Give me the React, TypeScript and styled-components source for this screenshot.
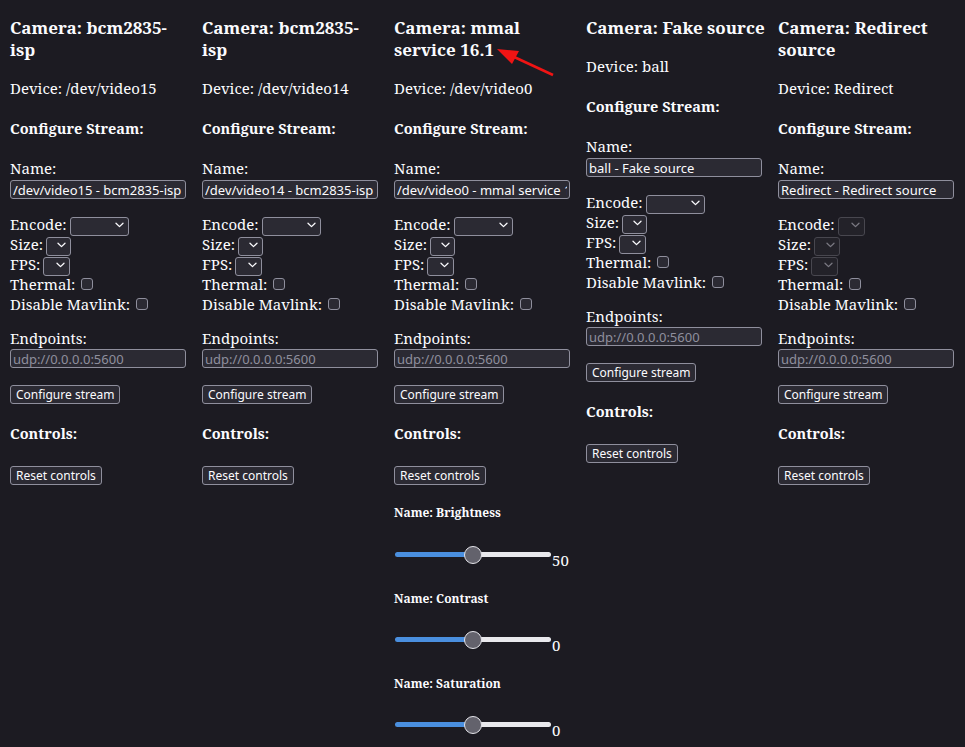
import React from 'react';
import styled, { createGlobalStyle } from 'styled-components';

const Global = createGlobalStyle`
  html, body { margin: 0; padding: 0; background: #1c1b22; color: #fbfbfe; }
  body {
    font-family: "Noto Serif", "DejaVu Serif", "Liberation Serif", serif;
    font-size: 15px;
  }
  * { box-sizing: border-box; }
`;

const Page = styled.div`
  position: relative;
  display: grid;
  grid-template-columns: repeat(5, 181px);
  column-gap: 11px;
  padding: 0 10px 40px;
  align-items: start;
`;

const Column = styled.section`
  display: flex;
  flex-direction: column;
  align-items: flex-start;
  min-width: 0;
`;

const Title = styled.h3`
  margin: 17px 0 0;
  font-size: 17px;
  line-height: 22px;
  font-weight: 700;
`;

const Text = styled.div<{ $mt: number }>`
  margin-top: ${p => p.$mt}px;
  line-height: 20px;
  white-space: nowrap;
`;

const Heading = styled.h4<{ $mt: number }>`
  margin: ${p => p.$mt}px 0 0;
  font-size: 14.5px;
  line-height: 20px;
  font-weight: 700;
`;

const TextInput = styled.input<{ $mt: number }>`
  margin-top: ${p => p.$mt}px;
  width: 176px;
  height: 19px;
  padding: 0 2px;
  background: #2b2a33;
  color: #fbfbfe;
  border: 1px solid #8f8f9d;
  border-radius: 3px;
  font-family: "Noto Sans", "DejaVu Sans", sans-serif;
  font-size: 13px;
  outline: none;
  &::placeholder { color: #8f8f9d; opacity: 1; }
`;

const Options = styled.div`
  margin-top: 15px;
  display: flex;
  flex-direction: column;
`;

const OptionRow = styled.label`
  display: flex;
  align-items: center;
  height: 20px;
  white-space: nowrap;
`;

const SelectWrap = styled.span<{ $w: number }>`
  position: relative;
  display: inline-block;
  width: ${p => p.$w}px;
  height: 19px;
  margin-left: 3px;
`;

const Select = styled.select<{ $dim?: boolean }>`
  appearance: none;
  -webkit-appearance: none;
  width: 100%;
  height: 100%;
  background: #2b2a33;
  border: 1px solid ${p => (p.$dim ? '#5b5a63' : '#8f8f9d')};
  border-radius: 3px;
  color: #fbfbfe;
  font-size: 12px;
  padding: 0 4px;
  outline: none;
  &:disabled { background: #26252d; }
`;

const Chevron = styled.svg<{ $dim?: boolean }>`
  position: absolute;
  right: 5px;
  top: 7px;
  width: 9px;
  height: 6px;
  pointer-events: none;
  stroke: ${p => (p.$dim ? '#7a7982' : '#fbfbfe')};
`;

const Check = styled.input`
  appearance: none;
  -webkit-appearance: none;
  width: 12px;
  height: 12px;
  margin: 0 0 0 6px;
  background: #2b2a33;
  border: 1px solid #8f8f9d;
  border-radius: 3px;
`;

const Button = styled.button<{ $mt: number }>`
  margin-top: ${p => p.$mt}px;
  height: 19px;
  padding: 0 5px;
  background: #2b2a33;
  color: #fbfbfe;
  border: 1px solid #8f8f9d;
  border-radius: 3px;
  font-family: "Noto Sans", "DejaVu Sans", sans-serif;
  font-size: 12px;
  line-height: 17px;
`;

const ControlName = styled.h5<{ $mt: number }>`
  margin: ${p => p.$mt}px 0 0;
  font-size: 12px;
  line-height: 16px;
  font-weight: 700;
`;

const SliderRow = styled.div<{ $mt: number }>`
  margin-top: ${p => p.$mt}px;
  display: flex;
  align-items: flex-end;
`;

const Range = styled.input`
  appearance: none;
  -webkit-appearance: none;
  width: 156px;
  height: 17px;
  margin: 0 1px 5px 1px;
  background: transparent;
  &::-webkit-slider-runnable-track {
    height: 5px;
    border-radius: 3px;
    background: var(--track);
  }
  &::-webkit-slider-thumb {
    -webkit-appearance: none;
    width: 18px;
    height: 18px;
    margin-top: -6.5px;
    border-radius: 50%;
    background: #63626c;
    border: 1.5px solid #e4e4ea;
  }
`;

const SliderValue = styled.span`
  line-height: 16px;
  font-size: 15px;
`;

const Arrow = styled.svg`
  position: absolute;
  left: 490px;
  top: 40px;
  width: 70px;
  height: 42px;
  overflow: visible;
`;

type Cam = {
  title: string;
  device: string;
  name: string;
  encodeW: number;
  sizeW: number;
  fpsW: number;
  disabled?: boolean;
  controls?: { name: string; value: number; pos: number }[];
};

const cams: Cam[] = [
  { title: 'Camera: bcm2835-isp', device: '/dev/video15', name: '/dev/video15 - bcm2835-isp', encodeW: 59, sizeW: 25, fpsW: 27 },
  { title: 'Camera: bcm2835-isp', device: '/dev/video14', name: '/dev/video14 - bcm2835-isp', encodeW: 59, sizeW: 25, fpsW: 27 },
  {
    title: 'Camera: mmal service 16.1', device: '/dev/video0', name: '/dev/video0 - mmal service 16.1', encodeW: 59, sizeW: 25, fpsW: 27,
    controls: [
      { name: 'Name: Brightness', value: 50, pos: 50 },
      { name: 'Name: Contrast', value: 0, pos: 50 },
      { name: 'Name: Saturation', value: 0, pos: 50 },
    ],
  },
  { title: 'Camera: Fake source', device: 'ball', name: 'ball - Fake source', encodeW: 59, sizeW: 25, fpsW: 27 },
  { title: 'Camera: Redirect source', device: 'Redirect', name: 'Redirect - Redirect source', encodeW: 27, sizeW: 26, fpsW: 27, disabled: true },
];

const Dropdown: React.FC<{ w: number; dim?: boolean }> = ({ w, dim }) => (
  <SelectWrap $w={w}>
    <Select $dim={dim} disabled={dim} defaultValue="">
      <option value=""></option>
    </Select>
    <Chevron $dim={dim} viewBox="0 0 9 6" fill="none" strokeWidth="1.3" strokeLinecap="round" strokeLinejoin="round">
      <path d="M1 1.2 L4.5 4.6 L8 1.2" />
    </Chevron>
  </SelectWrap>
);

const CameraColumn: React.FC<{ cam: Cam }> = ({ cam }) => (
  <Column>
    <Title>{cam.title}</Title>
    <Text $mt={17}>Device: {cam.device}</Text>
    <Heading $mt={20}>Configure Stream:</Heading>
    <Text $mt={20}>Name:</Text>
    <TextInput $mt={2} defaultValue={cam.name} />
    <Options>
      <OptionRow>Encode:<Dropdown w={cam.encodeW} dim={cam.disabled} /></OptionRow>
      <OptionRow>Size:<Dropdown w={cam.sizeW} dim={cam.disabled} /></OptionRow>
      <OptionRow>FPS:<Dropdown w={cam.fpsW} dim={cam.disabled} /></OptionRow>
      <OptionRow>Thermal:<Check type="checkbox" /></OptionRow>
      <OptionRow>Disable Mavlink:<Check type="checkbox" /></OptionRow>
    </Options>
    <Text $mt={14}>Endpoints:</Text>
    <TextInput $mt={1} placeholder="udp://0.0.0.0:5600" />
    <Button $mt={17}>Configure stream</Button>
    <Heading $mt={19}>Controls:</Heading>
    <Button $mt={23}>Reset controls</Button>
    {cam.controls?.map((c, i) => (
      <React.Fragment key={c.name}>
        <ControlName $mt={i === 0 ? 20 : 23}>{c.name}</ControlName>
        <SliderRow $mt={i === 0 ? 25 : 24}>
          <Range
            type="range"
            min={0}
            max={100}
            defaultValue={c.pos}
            style={{ ['--track' as any]: `linear-gradient(to right, #4a8fdf 0 ${c.pos}%, #e9e9ed ${c.pos}% 100%)` }}
          />
          <SliderValue>{c.value}</SliderValue>
        </SliderRow>
      </React.Fragment>
    ))}
  </Column>
);

export default function App() {
  return (
    <>
      <Global />
      <Page>
        {cams.map((c, i) => (
          <CameraColumn key={i} cam={c} />
        ))}
        <Arrow viewBox="0 0 70 42">
          <line x1="63" y1="35" x2="22" y2="16" stroke="#f01414" strokeWidth="2.6" />
          <polygon points="7,9 29,11 22,24" fill="#f01414" />
        </Arrow>
      </Page>
    </>
  );
}
